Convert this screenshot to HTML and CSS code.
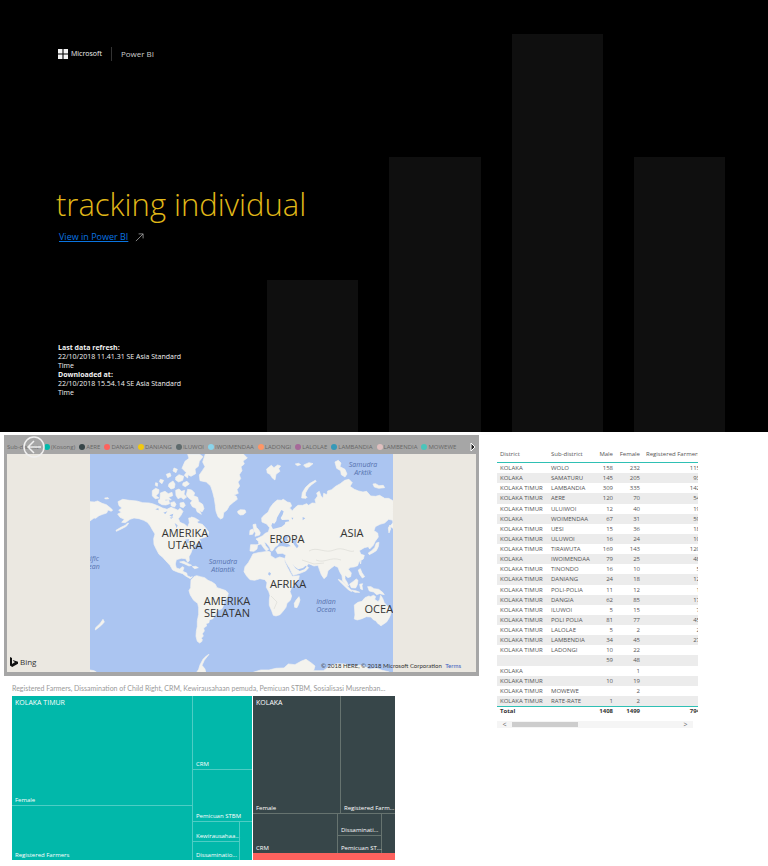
FILE: index.html
```html
<!DOCTYPE html>
<html lang="id">
  <head>
    <meta charset="UTF-8" />
    <meta name="viewport" content="width=device-width, initial-scale=1.0" />
    <title>tracking individual</title>
    <link rel="stylesheet" href="styles.css">
  </head>
  <body>
    <header class="cover">
      <div class="bars">
        <div class="bar bar-low"></div>
        <div class="bar bar-mid"></div>
        <div class="bar bar-high"></div>
        <div class="bar bar-mid"></div>
      </div>
      <div class="cover-text">
        <div class="brand">
          <svg class="ms-logo" viewBox="0 0 9 9">
            <path d="M0 0h4v4H0zM5 0h4v4H5zM0 5h4v4H0zM5 5h4v4H5z" fill="#f2f2f2" />
          </svg>
          <span>Microsoft</span>
          <span class="product">Power BI</span>
        </div>
        <h1>tracking individual</h1>
        <div class="view">
          <a href="#report">View in Power BI</a>
          <svg class="arrow" viewBox="0 0 10 10">
            <path d="M1 9L9 1M4 1h5v5" fill="none" stroke="#b5b5b5" stroke-width="0.8" />
          </svg>
        </div>
        <div class="dates">
          <b>Last data refresh:</b>
          <p>22/10/2018 11.41.31 SE Asia Standard Time</p>
          <b>Downloaded at:</b>
          <p>22/10/2018 15.54.14 SE Asia Standard Time</p>
        </div>
      </div>
    </header>

    <main class="report" id="report">
      <div class="left">
        <section class="map-card">
          <div class="legend">
            <span class="legend-title">Sub-district</span>
            <span class="key"><i class="dot teal"></i>(Kosong)</span>
            <span class="key"><i class="dot dark"></i>AERE</span>
            <span class="key"><i class="dot red"></i>DANGIA</span>
            <span class="key"><i class="dot yellow"></i>DANIANG</span>
            <span class="key"><i class="dot gray"></i>ILUWOI</span>
            <span class="key"><i class="dot sky"></i>IWOIMENDAA</span>
            <span class="key"><i class="dot orange"></i>LADONGI</span>
            <span class="key"><i class="dot purple"></i>LALOLAE</span>
            <span class="key"><i class="dot blue"></i>LAMBANDIA</span>
            <span class="key"><i class="dot pink"></i>LAMBENDIA</span>
            <span class="key"><i class="dot mint"></i>MOWEWE</span>
            <button class="more" aria-label="Next">
              <svg viewBox="0 0 6 10"><path d="M1 1l4 4-4 4z" fill="#222" stroke="#fff" /></svg>
            </button>
            <button class="back" aria-label="Back">
              <svg viewBox="0 0 22 22">
                <circle cx="11" cy="11" r="10" fill="none" stroke="#f0f0f0" stroke-width="1.5" />
                <path d="M18 11H5M11 5l-6 6 6 6" fill="none" stroke="#f0f0f0" stroke-width="1.5" />
              </svg>
            </button>
          </div>
          <div class="map">
            <svg class="world" viewBox="0 0 303 218">
              <rect width="303" height="218" fill="#abc5f1" />
              <g class="land" transform="translate(0 -4) scale(0.3333)">
                <!-- greenland, iceland -->
                <path d="M346 12L338 36 345 50 337 62 328 75 330 92 349 96 362 108 368 126 373 146 376 166 378 184 384 200 392 207 399 203 401 188 411 180 418 167 430 157 442 148 439 139 432 135 445 130 441 119 449 108 444 96 452 86 448 74 456 62 453 50 463 42 459 33 472 24 460 12Z" />
                <path d="M443 184l8-5 14 1 3 7-8 7-9 1-7-5z" />
                <!-- north america -->
                <path d="M84 155L98 148 118 151 140 153 158 158 178 159 190 162 205 168 218 174 231 178 243 172 254 176 264 181 270 175 279 184 273 196 265 206 270 217 284 223 293 231 298 218 296 204 306 203 316 209 325 220 337 223 347 234 356 246 354 258 341 263 327 267 333 276 321 279 313 289 306 300 303 309 297 320 298 332 293 337 287 326 274 325 259 329 256 342 259 354 269 357 277 350 282 353 278 364 290 369 292 377 302 382 307 380 301 386 287 378 278 371 262 366 248 360 240 346 227 332 218 322 207 313 199 298 192 283 191 266 195 252 187 239 181 228 172 217 161 211 147 206 132 204 120 208 106 218 95 217 103 208 90 202 83 192 94 187 86 181 96 174 87 167Z" />
                <!-- canadian arctic -->
                <path d="M187 122l10-7 10 4-1 10-8 8 9 7-11 2-9-8zM211 129l14-5 10 7 11-4 2 10-12 5 8 8-16-2-6 8-12-7zM237 101l12-8 6 9-2 12-10 3-8-8zM257 82l10-8 14 5-3 12-12 5-9-6zM276 55l9-21 12-9-4-12h36l10 7-11 14-3 15-10 8 2 14-14 8-9-5-1 10-10-8 6-8zM279 99l12-5 7 8-12 8-8-4zM257 121l10-4 8 7 9-3-2 12 8 8-9 7-8-6-9 4-6-10zM293 118l12 2 9 9-3 8 12 5 3 13 12 8 4 13-6 10-8-5 6 12-13-8-3-10-11-5-6-11 6-7-11-8-7-9zM205 150l13-4 9 7 9-3 3 11-11 4-12-1-10-6zM304 201l11 3 13 8-10 4-12-4zM242 158l11-3 5 8-4 8-10-3zM270 159l11-2 5 9-6 7-9-3zM211 88l10 3-5 10-8-6zM197 98l6 2-1 9-6-3zM229 73l11-4 3 9-10 5zM252 54l10 4-4 10-9-5z" />
                <!-- alaska edge and aleutians, siberia on the left -->
                <path d="M0 155l13 1 10-3 13 7 13 4 10 8 9 8-4 4-10-4-4 9-12 4-11 4-10 8-5-1-12 9z" />
                <path d="M44 144l10-1 2 3-10 1zM78 241l15-9 13-6 7-7 3 1-7 9-15 8-15 7z" />
                <path d="M269 336l12-2 14 7 10 5-8 2-13-6zM307 350l10-1 8 4-11 3z" />
                <!-- south america -->
                <path d="M303 390l9-10 8-3 11 3 13 3 10 8 12 5 10 7 5 10 13 4 14 5 7 8-3 12-8 8-3 15-5 11-13 5-7 13-7 12-11 4-1 8-9 3 2 7-9 6 2 9-6 8 3 7-6 7 2 9-7 5-7-5-4-15 1-15 3-15 0-17 4-19 0-20-3-13-12-9-10-16-4-13 5-9z" />
                <path d="M329 563l9 7-8 0-6-5z" />
                <!-- europe and asia -->
                <path d="M480 303L482 284 497 284 507 284 505 274 498 267 509 262 518 257 526 250 535 246 539 233 530 222 516 216 515 204 523 195 534 187 541 172 551 159 562 150 574 151 580 148 592 156 601 158 605 168 599 174 607 182 614 174 624 166 638 166 650 161 656 166 666 159 678 160 675 149 683 138 680 129 688 124 693 138 699 145 701 130 711 134 713 123 725 119 737 109 751 101 764 91 777 88 787 98 780 109 793 118 806 123 819 126 830 124 842 138 857 139 869 136 884 145 896 145 909 152V235L900 229 909 218V211L896 208 884 219 870 223 856 230 852 242 863 249 865 261 855 275 850 286 839 297 835 290 823 293 808 302 813 313 823 316 820 327 807 335 803 347 792 351 781 352 775 358 784 369 782 380 774 383 765 375 765 387 772 398 776 408 768 404 758 392 756 377 749 365 744 352 733 347 724 354 714 362 710 379 702 386 694 374 688 358 684 346 672 348 656 341 650 348 656 353 647 363 630 370 610 376 606 370 599 355 589 339 584 327 588 315 577 310 563 311 557 300 565 291 575 289 590 292 604 289 595 281 583 277 576 271 568 278 563 286 555 291 548 302 543 303 539 292 530 280 523 275 527 287 536 298 529 303 522 295 513 282 503 284 501 297 492 304Z" />
                <!-- britain and ireland -->
                <path d="M489 224l8-2 2 10 7 7 5 9-2 7-14 4 2-9-5-8zM480 241l8-4 4 8-4 8-9 1z" />
                <!-- arctic islands -->
                <path d="M530 57l14-11 8 7 11-8 9 3-6 8 4 8-12 9-3 17-8-6-7-11-8-4zM735 36l10-5 8 8-3 11 15 8 6 14-6 9-11-7-2-12-12-7zM849 102l8-1 10 6 13-1 4 7-18 2-13-4zM616 42l10-2 6 4-10 3zM641 45l16-7 12 3-12 10-10 1z" />
                <path d="M635 144l2-16 10-16 13-12 16-9 3 3-14 10-10 10-8 14-1 8 5 6-3 3z" />
                <!-- africa -->
                <path d="M462 365L465 350 475 338 483 324 489 312 504 308 519 306 534 304 541 306 542 317 556 326 569 321 583 325 585 337 592 352 599 365 607 379 628 377 626 387 613 402 604 414 600 425 605 438 601 451 591 460 588 472 579 484 570 494 558 498 550 496 545 482 538 466 538 449 540 436 536 424 529 412 531 398 525 389 510 386 494 391 480 389 470 378Z" />
                <path d="M627 440l3 10-4 13-5 10-7-1-1-12 5-9z" />
                <!-- japan, indonesia, philippines -->
                <path d="M859 279l8-2-2 13-6 12-11 7-10 5-3-5 10-7 9-9zM895 234l5-9 2 12-5 12zM745 388l9 4 12 10 14 14 5 9-10-6-14-13-13-13zM782 420l15 2 12 5-14 0zM779 402l10-7 10-8 5 4-2 13-5 10-13-1zM809 403l9-2-2 6 2 12-6-2zM805 360l6-4 5 12 8 12-7 4-8-11zM833 410l10 0 9 6 14 2 12 9 5 7-14-3-9 3-9-8-13-3zM810 338l3-5-1 9z" />
                <!-- australia and new zealand -->
                <path d="M793 465l11-8 12-3 9-11 12-5 4 2 10-4 6 4-3 8 10 7 5-6 3-13 6 9 5 13 8 9 9 11 3 13-5 12-8 13-12 8-13-2-8-10-7-3-7-8-14-1-13 6-14 4-9-3 2-12z" />
                <path d="M869 519l8 0-2 8-5-1zM39 508l4 8-8 9-12 10-7 5 1-7 13-12z" />
                <!-- antarctica -->
                <path d="M0 660l12 2 8 5H0zM320 667l6-9 4-13 9-17 10-10 8-5-14 18-7 15 9 11 2 9zM490 667l22-7 25 0 21-5 24-1 13-12 20 2 18-10 15-6 16 11 11 9-4 14 29 0 22-15 20-6 22 1 18 7 22-4 20 4 13 9 23-3 17 6 21 5V667z" />
              </g>
              <!-- baltic, black sea, caspian and the lakes -->
              <g fill="#abc5f1" transform="translate(0 -4) scale(0.3333)">
                <path d="M574 180l7 4-3 10-6 10 4 6 20-1 2 5-12 2-1 6-10 8-14 4-12 3-5-10 3-8 6 2 6-8 2-10zM614 267l7 4-2 9 7 8-5 7-8-10-5-9zM537 366l6 4-3 7-6-4zM578 405l7 3-2 7-5-3zM583 257l-4 8 6 7 10 2-4-9 6-6zM638 201l8 4-8 6zM604 203l6 0-2 6zM747 262l8-7-2 8zM238 196l12-5-3 10zM220 188l12-4-6 8zM254 219l9 7-3 8zM285 269l13-2-3 8 12-2-14 6zM196 178l9-4 1 7zM239 203l11-2-6 5z" />
                <path d="M607 341l8 10 10 7 14-4 8-7 3 3-7 8-14 5-13-9z" />
              </g>
              <g fill="none" stroke="#dddcd7" stroke-width="0.7">
                <path d="M219 97c8-5 16 3 25-1s15 3 20 1M226 106c9 4 14-4 25 0M212 106l12 4 10-1M181 142l6 6-3 7" />
              </g>
              <g class="land-name">
                <text x="95" y="83">AMERIKA</text>
                <text x="95" y="95">UTARA</text>
                <text x="137" y="151">AMERIKA</text>
                <text x="137" y="163">SELATAN</text>
                <text x="197" y="89">EROPA</text>
                <text x="262" y="83">ASIA</text>
                <text x="198" y="134">AFRIKA</text>
                <text x="298" y="159">OCEANIA</text>
              </g>
              <g class="sea-name">
                <text x="273" y="13">Samudra</text>
                <text x="273" y="21">Arktik</text>
                <text x="133" y="110">Samudra</text>
                <text x="133" y="118">Atlantik</text>
                <text x="236" y="150">Indian</text>
                <text x="236" y="158">Ocean</text>
                <text x="-1" y="107">Pacific</text>
                <text x="0" y="115">Ocean</text>
              </g>
            </svg>
            <div class="bing">
              <svg viewBox="0 0 8 10"><path d="M0 0l2 1v6l3-2-1.500-.7L2.700 3 8 4.800v2L2.200 10 0 8.500z" fill="#111" /></svg>
              Bing
            </div>
            <div class="credit">© 2018 HERE, © 2018 Microsoft Corporation <a href="#terms">Terms</a></div>
          </div>
        </section>

        <section class="tree-card">
          <h2>Registered Farmers, Dissamination of Child Right, CRM, Kewirausahaan pemuda, Pemicuan STBM, Sosialisasi Musrenban...</h2>
          <div class="treemap">
            <div class="timur">
              <div class="cell timur-female"><strong>KOLAKA TIMUR</strong><span>Female</span></div>
              <div class="cell timur-farmers"><span>Registered Farmers</span></div>
              <div class="cell timur-crm"><span>CRM</span></div>
              <div class="cell timur-stbm"><span>Pemicuan STBM</span></div>
              <div class="cell timur-kewira"><span>Kewirausahaa...</span></div>
              <div class="cell timur-dissa"><span>Dissaminatio...</span></div>
              <div class="cell timur-rest"></div>
            </div>
            <div class="kolaka">
              <div class="kolaka-top">
                <div class="cell"><strong>KOLAKA</strong><span>Female</span></div>
                <div class="cell"><span>Registered Farm...</span></div>
              </div>
              <div class="kolaka-bottom">
                <div class="cell kolaka-crm"><span>CRM</span></div>
                <div class="cell"><span>Dissaminati...</span></div>
                <div class="cell kolaka-rest"></div>
                <div class="cell"><span>Pemicuan ST...</span></div>
              </div>
              <div class="blank"></div>
            </div>
          </div>
        </section>
      </div>

      <section class="table-card">
        <div class="table-view">
          <table>
            <colgroup>
              <col class="col-district"><col class="col-sub"><col class="col-male"><col class="col-female"><col class="col-farmers">
            </colgroup>
            <thead>
              <tr><th>District</th><th>Sub-district</th><th class="num">Male</th><th class="num">Female</th><th class="num">Registered Farmers</th></tr>
            </thead>
            <tbody>
              <tr><td>KOLAKA</td><td>WOLO</td><td class="num">158</td><td class="num">232</td><td class="num">115</td></tr>
              <tr><td>KOLAKA</td><td>SAMATURU</td><td class="num">145</td><td class="num">205</td><td class="num">93</td></tr>
              <tr><td>KOLAKA TIMUR</td><td>LAMBANDIA</td><td class="num">309</td><td class="num">335</td><td class="num">142</td></tr>
              <tr><td>KOLAKA TIMUR</td><td>AERE</td><td class="num">120</td><td class="num">70</td><td class="num">54</td></tr>
              <tr><td>KOLAKA TIMUR</td><td>ULUIWOI</td><td class="num">12</td><td class="num">40</td><td class="num">19</td></tr>
              <tr><td>KOLAKA</td><td>WOIMENDAA</td><td class="num">67</td><td class="num">31</td><td class="num">59</td></tr>
              <tr><td>KOLAKA TIMUR</td><td>UESI</td><td class="num">15</td><td class="num">36</td><td class="num">18</td></tr>
              <tr><td>KOLAKA TIMUR</td><td>ULUWOI</td><td class="num">16</td><td class="num">24</td><td class="num">10</td></tr>
              <tr><td>KOLAKA TIMUR</td><td>TIRAWUTA</td><td class="num">169</td><td class="num">143</td><td class="num">120</td></tr>
              <tr><td>KOLAKA</td><td>IWOIMENDAA</td><td class="num">79</td><td class="num">25</td><td class="num">48</td></tr>
              <tr><td>KOLAKA TIMUR</td><td>TINONDO</td><td class="num">16</td><td class="num">10</td><td class="num">5</td></tr>
              <tr><td>KOLAKA TIMUR</td><td>DANIANG</td><td class="num">24</td><td class="num">18</td><td class="num">12</td></tr>
              <tr><td>KOLAKA TIMUR</td><td>POLI-POLIA</td><td class="num">11</td><td class="num">12</td><td class="num">1</td></tr>
              <tr><td>KOLAKA TIMUR</td><td>DANGIA</td><td class="num">62</td><td class="num">85</td><td class="num">17</td></tr>
              <tr><td>KOLAKA TIMUR</td><td>ILUWOI</td><td class="num">5</td><td class="num">15</td><td class="num">7</td></tr>
              <tr><td>KOLAKA TIMUR</td><td>POLI POLIA</td><td class="num">81</td><td class="num">77</td><td class="num">45</td></tr>
              <tr><td>KOLAKA TIMUR</td><td>LALOLAE</td><td class="num">5</td><td class="num">2</td><td class="num">2</td></tr>
              <tr><td>KOLAKA TIMUR</td><td>LAMBENDIA</td><td class="num">34</td><td class="num">45</td><td class="num">27</td></tr>
              <tr><td>KOLAKA TIMUR</td><td>LADONGI</td><td class="num">10</td><td class="num">22</td><td></td></tr>
              <tr><td></td><td></td><td class="num">59</td><td class="num">48</td><td></td></tr>
              <tr><td>KOLAKA</td><td></td><td></td><td class="num">1</td><td></td></tr>
              <tr><td>KOLAKA TIMUR</td><td></td><td class="num">10</td><td class="num">19</td><td></td></tr>
              <tr><td>KOLAKA TIMUR</td><td>MOWEWE</td><td></td><td class="num">2</td><td></td></tr>
              <tr><td>KOLAKA TIMUR</td><td>RATE-RATE</td><td class="num">1</td><td class="num">2</td><td></td></tr>
            </tbody>
            <tfoot>
              <tr><td>Total</td><td></td><td class="num">1408</td><td class="num">1499</td><td class="num">794</td></tr>
            </tfoot>
          </table>
        </div>
        <div class="scroll">
          <button aria-label="Scroll left">&lt;</button>
          <div class="track"><div class="thumb"></div></div>
          <button aria-label="Scroll right">&gt;</button>
        </div>
      </section>
    </main>
  </body>
</html>
```
FILE: styles.css
```css
* {
  box-sizing: border-box;
}

body {
  margin: 0;
  background-color: #fff;
  font-family: "Open Sans", "Noto Sans", sans-serif;
  font-size: 6px;
  color: #555;
}

h1, h2, p {
  margin: 0;
  font-weight: normal;
}

button {
  padding: 0;
  border: none;
  background: none;
  font-family: inherit;
  cursor: pointer;
}

svg {
  display: block;
}

/* cover */
.cover {
  display: grid;
  background-color: #000;
  color: #f2f2f2;
}

.bars, .cover-text {
  grid-area: 1 / 1;
}

.bars {
  display: flex;
  align-items: flex-end;
  gap: 31px;
  padding: 34px 43px 0 267px;
}

.bar {
  flex: 1;
  background-color: #0f0f0f;
}

.bar-low {
  height: 152px;
}

.bar-mid {
  height: 275px;
}

.bar-high {
  height: 398px;
}

.cover-text {
  padding: 47px 0 34px 58px;
}

.brand {
  display: flex;
  align-items: center;
  font-size: 7px;
  line-height: 14px;
}

.ms-logo {
  width: 10px;
  height: 10px;
  margin-right: 3px;
}

.product {
  margin-left: 9px;
  padding-left: 9px;
  border-left: 1px solid #333;
  color: #ccc;
  font-size: 8px;
}

.cover h1 {
  margin-top: 120px;
  margin-left: -2px;
  font-size: 31px;
  font-weight: 300;
  line-height: 46px;
  color: #e0b818;
}

.view {
  display: flex;
  align-items: center;
  gap: 7px;
  padding-left: 1px;
  font-size: 9px;
  line-height: 20px;
}

.view a {
  color: #0a74e0;
}

.arrow {
  width: 9px;
  height: 9px;
}

.dates {
  width: 130px;
  margin-top: 96px;
  font-size: 7px;
  line-height: 9px;
}

/* report */
.report {
  display: flex;
  align-items: flex-start;
  gap: 18px;
  padding: 3px 70px 6px 4px;
}

.left {
  flex: 1;
  min-width: 0;
}

.map-card {
  padding: 0 3px 4px;
  background-color: #a6a6a6;
}

.legend {
  position: relative;
  display: flex;
  align-items: center;
  gap: 4px;
  height: 19px;
  padding-top: 4px;
  color: #666;
  white-space: nowrap;
}

.legend-title {
  width: 33px;
}

.key {
  display: flex;
  align-items: center;
  gap: 1px;
}

.dot {
  width: 6px;
  height: 6px;
  border-radius: 50%;
}

.teal { background-color: #01b8aa; }
.dark { background-color: #374649; }
.red { background-color: #fd625e; }
.yellow { background-color: #f2c80f; }
.gray { background-color: #5f6b6d; }
.sky { background-color: #8ad4eb; }
.orange { background-color: #fe9666; }
.purple { background-color: #a66999; }
.blue { background-color: #3599b8; }
.pink { background-color: #dfbfbf; }
.mint { background-color: #4ac5bb; }

.more {
  width: 6px;
  height: 10px;
  margin-left: auto;
}

.back {
  position: absolute;
  left: 16px;
  top: 1px;
  z-index: 1;
  width: 22px;
  height: 22px;
}

.map {
  position: relative;
  background-color: #ebe8e1;
}

.world {
  width: 303px;
  height: 218px;
  margin: 0 auto;
}

.land {
  fill: #f4f3ee;
  stroke: #f4f3ee;
  stroke-width: 2;
  stroke-linejoin: round;
}

.land-name {
  font-size: 11px;
  text-anchor: middle;
  fill: #333;
}

.sea-name {
  font-size: 7px;
  font-style: italic;
  text-anchor: middle;
  fill: #5672ae;
}

.bing {
  position: absolute;
  left: 3px;
  bottom: 4px;
  display: flex;
  align-items: center;
  gap: 2px;
  font-size: 8px;
  line-height: 12px;
  color: #333;
}

.bing svg {
  width: 8px;
  height: 10px;
}

.credit {
  position: absolute;
  right: 15px;
  bottom: 2px;
  font-family: Lato, Arial, sans-serif;
  line-height: 8px;
  color: #333;
}

.credit a {
  margin-left: 2px;
  color: #3c5cc0;
  text-decoration: none;
}

/* treemap */
.tree-card {
  padding: 7px 84px 0 8px;
}

.tree-card h2 {
  overflow: hidden;
  font-family: Lato, "Open Sans", sans-serif;
  font-size: 7px;
  line-height: 11px;
  white-space: nowrap;
  color: #999;
  padding-bottom: 2px;
}

.treemap {
  display: flex;
  gap: 1px;
  height: 164px;
}

.timur {
  flex: 240;
  display: grid;
  grid-template-columns: 180fr 47fr 13fr;
  grid-template-rows: 73fr 36fr 16fr 20fr 19fr;
  background-color: #01b8aa;
}

.cell {
  display: flex;
  flex-direction: column;
  min-width: 0;
  padding: 2px 2px 1px 3px;
  border: 0 solid #4dcdc4;
  color: #fff;
  line-height: 8px;
  white-space: nowrap;
}

.cell strong {
  font-size: 7px;
  font-weight: normal;
  line-height: 10px;
}

.cell span {
  margin-top: auto;
}

.timur-female {
  grid-area: 1 / 1 / 3 / 2;
}

.timur-farmers {
  grid-area: 3 / 1 / 6 / 2;
  border-top-width: 1px;
}

.timur-crm {
  grid-area: 1 / 2 / 2 / 4;
  border-left-width: 1px;
}

.timur-stbm {
  grid-area: 2 / 2 / 4 / 4;
  border-width: 1px 0 0 1px;
}

.timur-kewira {
  grid-area: 4 / 2 / 5 / 3;
  border-width: 1px 0 0 1px;
}

.timur-dissa {
  grid-area: 5 / 2 / 6 / 3;
  border-width: 1px 0 0 1px;
}

.timur-rest {
  grid-area: 4 / 3 / 6 / 4;
  border-width: 1px 0 0 1px;
}

.kolaka {
  flex: 142;
  display: grid;
  grid-template-rows: 117fr 40fr 7fr;
}

.kolaka-top, .kolaka-bottom {
  display: grid;
  background-color: #374649;
}

.kolaka-top {
  grid-template-columns: 87fr 55fr;
}

.kolaka-bottom {
  grid-template-columns: 84fr 44fr 14fr;
  grid-template-rows: 22fr 18fr;
}

.kolaka .cell {
  border-color: #66736f;
}

.kolaka .cell + .cell {
  border-left-width: 1px;
}

.kolaka-bottom .cell {
  border-top-width: 1px;
}

.kolaka-crm, .kolaka-rest {
  grid-row: 1 / 3;
}

.kolaka-rest {
  grid-column: 3;
}

.blank {
  background-color: #fd625e;
}

/* table */
.table-card {
  flex-shrink: 0;
  width: 201px;
  padding-top: 13px;
}

.table-view {
  overflow: hidden;
}

table {
  width: 206px;
  height: 267px;
  table-layout: fixed;
  border-spacing: 0;
}

.col-district { width: 51px; }
.col-sub { width: 41px; }
.col-male { width: 27px; }
.col-female { width: 27px; }
.col-farmers { width: 60px; }

th, td {
  padding: 0 3px;
  line-height: 8px;
  text-align: left;
  white-space: nowrap;
}

th {
  padding-bottom: 2px;
  border-bottom: 1px solid #2fc0b4;
  font-weight: normal;
  line-height: 12px;
}

.num {
  text-align: right;
}

tbody tr:nth-child(even) {
  background-color: #ececec;
}

tfoot td {
  border-top: 1px solid #2fc0b4;
  font-weight: bold;
  color: #333;
}

.scroll {
  display: flex;
  align-items: center;
  width: 196px;
  height: 7px;
  margin-top: 6px;
  background-color: #f5f5f5;
}

.scroll button {
  width: 15px;
  font-size: 7px;
  line-height: 6px;
  color: #666;
}

.track {
  flex: 1;
}

.thumb {
  width: 40%;
  height: 5px;
  background-color: #cdcdcd;
}
```
